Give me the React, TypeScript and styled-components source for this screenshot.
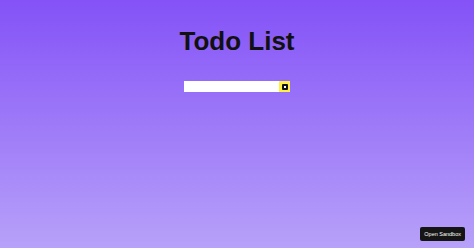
import React from 'react';
import styled, { createGlobalStyle } from 'styled-components';

const GlobalStyle = createGlobalStyle`
  html, body {
    margin: 0;
    padding: 0;
    height: 100%;
  }
  #root {
    height: 100%;
  }
`;

const Page = styled.div`
  position: relative;
  min-height: 248px;
  height: 100%;
  box-sizing: border-box;
  background: linear-gradient(180deg, #8452f7 0%, #b7a1f9 100%);
  font-family: 'Liberation Sans', Arial, sans-serif;
  display: flex;
  flex-direction: column;
  align-items: center;
  padding-top: 26px;
`;

const Title = styled.h1`
  margin: 0;
  font-size: 26px;
  font-weight: 700;
  color: #111;
  line-height: 30px;
`;

const Form = styled.form`
  display: flex;
  margin-top: 25px;
`;

const Input = styled.input`
  width: 95px;
  height: 11px;
  box-sizing: border-box;
  border: none;
  background: #fff;
  padding: 0;
  outline: none;
`;

const AddButton = styled.button`
  width: 11px;
  height: 11px;
  padding: 0;
  border: none;
  background: #ffee44;
  display: flex;
  align-items: center;
  justify-content: center;
`;

const SandboxButton = styled.button`
  position: absolute;
  right: 9px;
  bottom: 7px;
  height: 14px;
  padding: 0 4px;
  border: none;
  border-radius: 2px;
  background: #151515;
  color: #fff;
  font-family: 'Liberation Sans', Arial, sans-serif;
  font-size: 5.5px;
`;

export default function App() {
  return (
    <>
      <GlobalStyle />
      <Page>
        <Title>Todo List</Title>
        <Form onSubmit={(e) => e.preventDefault()}>
          <Input type="text" />
          <AddButton type="submit">
            <svg width="6" height="6" viewBox="0 0 6 6">
              <rect x="0" y="0" width="6" height="6" rx="1" fill="#111" />
              <rect x="2" y="2" width="2" height="2" fill="#fff" />
            </svg>
          </AddButton>
        </Form>
        <SandboxButton>Open Sandbox</SandboxButton>
      </Page>
    </>
  );
}
